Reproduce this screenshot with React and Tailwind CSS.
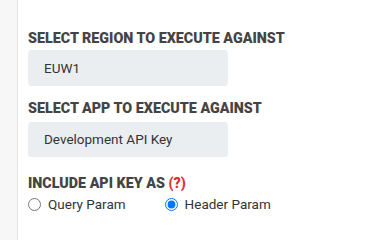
export default function App() {
  return (
    <div className="flex h-[240px] w-[374px] bg-white" style={{ fontFamily: 'Roboto, "Liberation Sans", Arial, sans-serif' }}>
      <div className="w-[18px] shrink-0 border-r border-[#e2e2e2] bg-[#f7f7f7]" />
      <div className="flex flex-col pl-[10px] pt-[30px]">
        <div className="text-[14.3px] font-black leading-[17px] text-[#444]">SELECT REGION TO EXECUTE AGAINST</div>
        <div className="mt-[3px] flex h-[36px] w-[200px] items-center rounded-[3px] bg-[#ebeef1] pl-[16px] text-[13.5px] text-[#333]">EUW1</div>
        <div className="mt-[14px] text-[14.3px] font-black leading-[17px] text-[#444]">SELECT APP TO EXECUTE AGAINST</div>
        <div className="mt-[5px] flex h-[35px] w-[200px] items-center rounded-[3px] bg-[#ebeef1] pl-[16px] text-[13.5px] text-[#333]">Development API Key</div>
        <div className="mt-[18px] text-[14.3px] font-black leading-[17px] text-[#444]">
          INCLUDE API KEY AS <span className="text-[#d9342b]">(?)</span>
        </div>
        <div className="mt-[2px] flex items-center text-[13.5px] text-[#333]">
          <label className="flex items-center">
            <input type="radio" name="k" className="m-0 h-[13px] w-[13px]" />
            <span className="ml-[7px]">Query Param</span>
          </label>
          <label className="ml-[39px] flex items-center">
            <input type="radio" name="k" defaultChecked className="m-0 h-[13px] w-[13px]" />
            <span className="ml-[7px]">Header Param</span>
          </label>
        </div>
      </div>
    </div>
  );
}
